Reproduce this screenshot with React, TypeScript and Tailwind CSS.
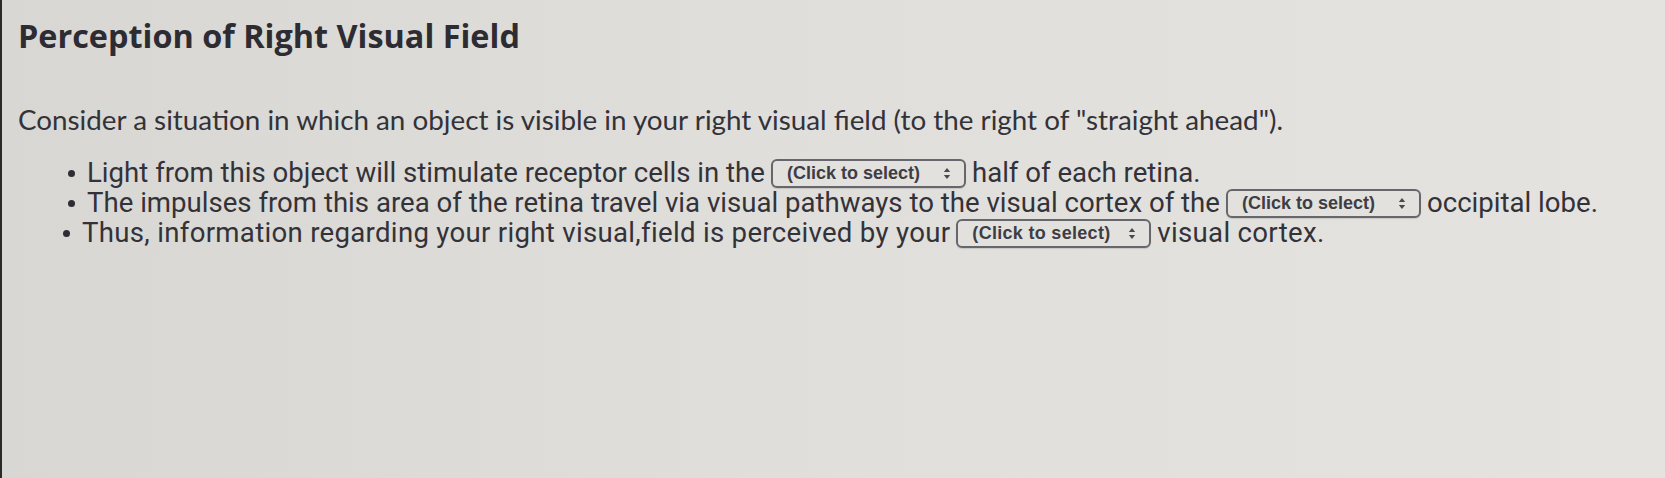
import React from "react";

function Select() {
  return (
    <span className="mx-[6px] inline-flex h-[29px] w-[195px] shrink-0 items-center justify-between rounded-[6px] border-2 border-[#67666c] bg-[#e2e1de] pl-[14px] pr-[13px] text-[18px] font-bold leading-[22px] text-[#3e3d44] shadow-[0_1px_1px_rgba(0,0,0,0.12)]" style={{ fontFamily: "'Liberation Sans', Arial, sans-serif" }}>
      <span>(Click to select)</span>
      <svg width="8" height="15" viewBox="0 0 8 15">
        <path d="M4 2 L7.2 6 L0.8 6 Z" fill="#4a4950" />
        <path d="M0.8 9 L7.2 9 L4 13 Z" fill="#4a4950" />
      </svg>
    </span>
  );
}

function Bullet({ children, className = "" }: { children: React.ReactNode; className?: string }) {
  return (
    <li className={"flex h-[30px] items-center " + className}>
      <span className="mr-[12px] inline-block h-[7px] w-[7px] shrink-0 rounded-full bg-[#2e2d33]" />
      <span className="flex items-center whitespace-nowrap">{children}</span>
    </li>
  );
}

export default function App() {
  return (
    <div className="relative h-[478px] w-[1665px] overflow-hidden border-l-2 border-[#2a2a2a] bg-gradient-to-r from-[#d8d7d3] via-[#e0dfdb] to-[#e4e3df] text-[#333239]" style={{ fontFamily: "Lato, 'Open Sans', sans-serif" }}>
      <div className="pl-[16px] pt-[15px]">
        <h1 className="text-[32.4px] font-bold leading-[40px] text-[#2d2c33]" style={{ fontFamily: "'Open Sans', sans-serif" }}>Perception of Right Visual Field</h1>
        <p className="mt-[49px] text-[27.8px] leading-[32px]">
          Consider a situation in which an object is visible in your right visual field (to the right of "straight ahead").
        </p>
        <ul className="mt-[22px] pl-[50px] text-[27.6px] leading-[30px]" style={{ fontFamily: "Roboto, sans-serif" }}>
          <Bullet>
            Light from this object will stimulate receptor cells in the<Select />half of each retina.
          </Bullet>
          <Bullet>
            The impulses from this area of the retina travel via visual pathways to the visual cortex of the<Select />occipital lobe.
          </Bullet>
          <Bullet className="-ml-[5px] tracking-[0.3px]">
            Thus, information regarding your right visual,field is perceived by your<Select />visual cortex.
          </Bullet>
        </ul>
      </div>
    </div>
  );
}
